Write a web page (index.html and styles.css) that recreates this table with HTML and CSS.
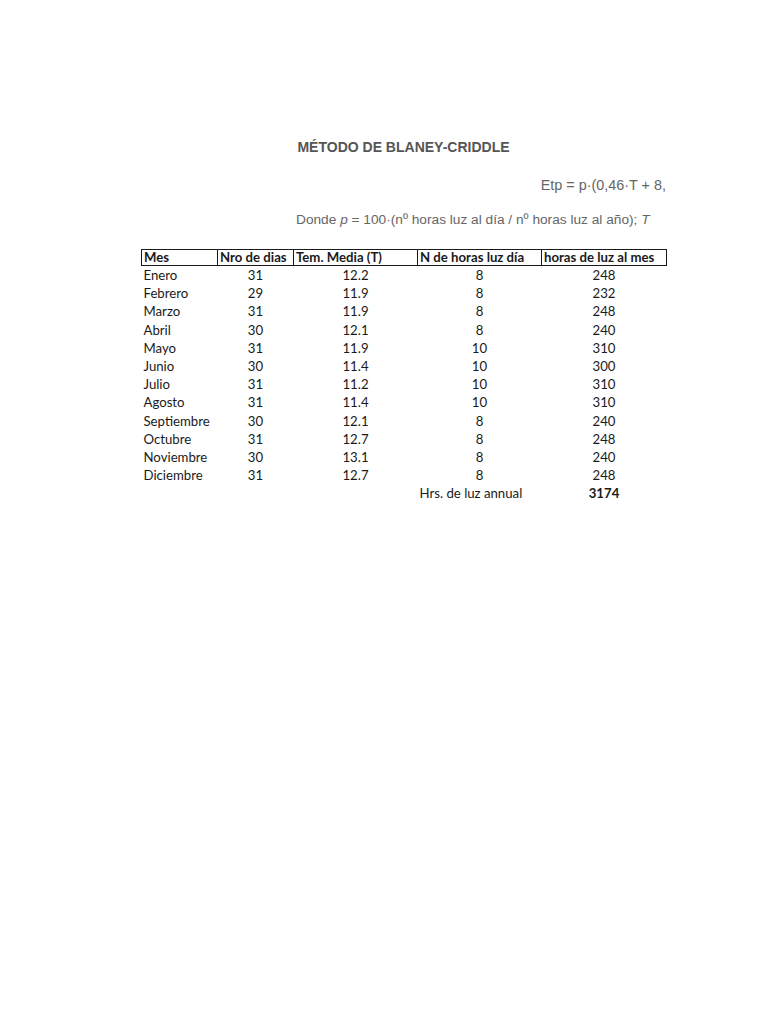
FILE: index.html
```html
<!DOCTYPE html>
<html lang="es">
<head>
<meta charset="utf-8">
<title>Método de Blaney-Criddle</title>
<link rel="stylesheet" href="styles.css">
</head>
<body>
<div class="page">
  <h1 class="title">MÉTODO DE BLANEY-CRIDDLE</h1>
  <p class="formula">Etp = p·(0,46·T + 8,</p>
  <p class="where">Donde <i>p</i> = 100·(nº horas luz al día / nº horas luz al año); <i>T</i></p>
  <table class="sheet">
    <colgroup>
      <col class="c1"><col class="c2"><col class="c3"><col class="c4"><col class="c5">
    </colgroup>
    <thead>
      <tr><th>Mes</th><th>Nro de dias</th><th>Tem. Media (T)</th><th>N de horas luz día</th><th>horas de luz al mes</th></tr>
    </thead>
    <tbody>
      <tr><td>Enero</td><td>31</td><td>12.2</td><td>8</td><td>248</td></tr>
      <tr><td>Febrero</td><td>29</td><td>11.9</td><td>8</td><td>232</td></tr>
      <tr><td>Marzo</td><td>31</td><td>11.9</td><td>8</td><td>248</td></tr>
      <tr><td>Abril</td><td>30</td><td>12.1</td><td>8</td><td>240</td></tr>
      <tr><td>Mayo</td><td>31</td><td>11.9</td><td>10</td><td>310</td></tr>
      <tr><td>Junio</td><td>30</td><td>11.4</td><td>10</td><td>300</td></tr>
      <tr><td>Julio</td><td>31</td><td>11.2</td><td>10</td><td>310</td></tr>
      <tr><td>Agosto</td><td>31</td><td>11.4</td><td>10</td><td>310</td></tr>
      <tr><td>Septiembre</td><td>30</td><td>12.1</td><td>8</td><td>240</td></tr>
      <tr><td>Octubre</td><td>31</td><td>12.7</td><td>8</td><td>248</td></tr>
      <tr><td>Noviembre</td><td>30</td><td>13.1</td><td>8</td><td>240</td></tr>
      <tr><td>Diciembre</td><td>31</td><td>12.7</td><td>8</td><td>248</td></tr>
      <tr class="total"><td></td><td></td><td></td><td class="label">Hrs. de luz annual</td><td class="sum">3174</td></tr>
    </tbody>
  </table>
</div>
</body>
</html>
```

FILE: styles.css
```css
html, body {
  margin: 0;
  padding: 0;
  background: #ffffff;
}

.page {
  width: 525px;
  margin-left: 141px;
  padding-top: 138px;
}

.title {
  margin: 0;
  text-align: center;
  font-family: "Liberation Sans", Arial, sans-serif;
  font-weight: bold;
  font-size: 14px;
  line-height: 18px;
  color: #555555;
}

.formula {
  margin: 20px 0 0 0;
  text-align: right;
  font-family: "Liberation Sans", Arial, sans-serif;
  font-size: 14.4px;
  line-height: 18px;
  color: #666666;
}

.where {
  margin: 17px 0 0 155px;
  font-family: "Liberation Sans", Arial, sans-serif;
  font-size: 13.7px;
  line-height: 18px;
  color: #666666;
  white-space: nowrap;
}

.sheet {
  margin-top: 20px;
  width: 525px;
  border-collapse: collapse;
  table-layout: fixed;
  font-family: Lato, "Open Sans", sans-serif;
  font-size: 13.2px;
  color: #1a1a1a;
}

.c1 { width: 76px; }
.c2 { width: 76px; }
.c3 { width: 124px; }
.c4 { width: 124px; }
.c5 { width: 125px; }

.sheet th {
  border: 1.5px solid #1a1a1a;
  text-align: left;
  font-weight: bold;
  padding: 0 2px;
  height: 15px;
  line-height: 15px;
  white-space: nowrap;
  overflow: hidden;
}

.sheet td {
  padding: 0 2px;
  height: 18.2px;
  line-height: 18px;
  text-align: center;
  white-space: nowrap;
}

.sheet td:first-child {
  text-align: left;
}

.sheet .label {
  text-align: left;
}

.sheet .sum {
  font-weight: bold;
}
```
